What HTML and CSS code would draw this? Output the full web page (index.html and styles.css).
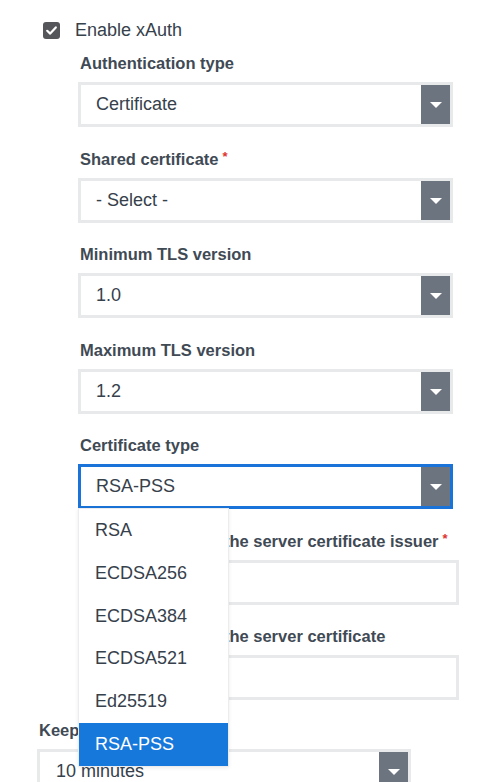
FILE: index.html
```html
<!DOCTYPE html>
<html>
<head>
<meta charset="utf-8">
<link rel="stylesheet" href="styles.css">
</head>
<body>
<div class="page">
  <label class="check-row">
    <span class="checkbox">
      <svg viewBox="0 0 17 17" width="17" height="17"><path d="M4.2 8.8 L7.2 11.6 L12.8 5.4" fill="none" stroke="#fff" stroke-width="2.2" stroke-linecap="round" stroke-linejoin="round"/></svg>
    </span>
    <span class="check-text">Enable xAuth</span>
  </label>

  <div class="group">
    <div class="field">
      <div class="label">Authentication type</div>
      <div class="select"><span class="value">Certificate</span><span class="btn"><i class="tri"></i></span></div>
    </div>
    <div class="field">
      <div class="label">Shared certificate<span class="req">*</span></div>
      <div class="select"><span class="value">- Select -</span><span class="btn"><i class="tri"></i></span></div>
    </div>
    <div class="field">
      <div class="label">Minimum TLS version</div>
      <div class="select"><span class="value">1.0</span><span class="btn"><i class="tri"></i></span></div>
    </div>
    <div class="field">
      <div class="label">Maximum TLS version</div>
      <div class="select"><span class="value">1.2</span><span class="btn"><i class="tri"></i></span></div>
    </div>
    <div class="field cert-field">
      <div class="label">Certificate type</div>
      <div class="select focused"><span class="value">RSA-PSS</span><span class="btn"><i class="tri"></i></span></div>
      <ul class="menu">
        <li>RSA</li>
        <li>ECDSA256</li>
        <li>ECDSA384</li>
        <li>ECDSA521</li>
        <li>Ed25519</li>
        <li class="selected">RSA-PSS</li>
      </ul>
    </div>
    <div class="field">
      <div class="label">Common name of the server certificate issuer<span class="req">*</span></div>
      <div class="input"></div>
    </div>
    <div class="field">
      <div class="label">Common name of the server certificate</div>
      <div class="input"></div>
    </div>
  </div>

  <div class="field outer-field">
    <div class="label">Keep alive interval</div>
    <div class="select wide"><span class="value">10 minutes</span><span class="btn"><i class="tri"></i></span></div>
  </div>
</div>
</body>
</html>
```

FILE: styles.css
```css
html, body {
  margin: 0;
  padding: 0;
  background: #fff;
  overflow: hidden;
}
body {
  font-family: "Liberation Sans", Arial, sans-serif;
  color: #3a4550;
}
.page {
  padding: 17px 0 0 43px;
  width: 496px;
  height: 782px;
  box-sizing: border-box;
}
.check-row {
  display: flex;
  align-items: center;
  gap: 15px;
  height: 26px;
}
.checkbox {
  width: 17px;
  height: 17px;
  border-radius: 3px;
  background: #555659;
  display: flex;
}
.check-text {
  font-size: 18px;
  color: #36414c;
}
.group {
  margin-left: 35px;
  margin-top: 11px;
  display: flex;
  flex-direction: column;
  gap: 22.5px;
}
.field {
  display: flex;
  flex-direction: column;
}
.label {
  font-size: 16.5px;
  font-weight: bold;
  line-height: 18px;
  height: 18px;
  margin-left: 2px;
  margin-bottom: 10px;
  color: #3f4a55;
  white-space: nowrap;
}
.req {
  color: #e0332f;
  font-size: 13px;
  vertical-align: top;
  margin-left: 4px;
  line-height: 14px;
}
.select {
  box-sizing: border-box;
  width: 375px;
  height: 45px;
  border: 3px solid #e8e9eb;
  background: #fff;
  display: flex;
  align-items: stretch;
}
.select .value {
  flex: 1;
  font-size: 18px;
  line-height: 39px;
  padding-left: 15px;
  color: #36414c;
}
.select .btn {
  width: 29px;
  background: #6c7480;
  display: flex;
  align-items: center;
  justify-content: center;
}
.tri {
  width: 0;
  height: 0;
  border-left: 6px solid transparent;
  border-right: 6px solid transparent;
  border-top: 6px solid #fff;
  margin-top: 1px;
}
.select.focused {
  border-color: #1a73d8;
}
.cert-field {
  position: relative;
}
.menu {
  position: absolute;
  left: 0;
  top: 72px;
  width: 151px;
  margin: 0;
  padding: 0;
  list-style: none;
  background: #fff;
  border: 1px solid #ececee;
  box-sizing: border-box;
  box-shadow: 0 1px 4px rgba(0, 0, 0, 0.08);
  z-index: 5;
}
.menu li {
  height: 42.8px;
  line-height: 42.8px;
  font-size: 18px;
  padding-left: 16px;
  color: #36414c;
}
.menu li.selected {
  background: #1778dc;
  color: #fff;
}
.input {
  box-sizing: border-box;
  width: 381px;
  height: 45px;
  border: 3px solid #e8e9eb;
  background: #fff;
}
.outer-field {
  margin-left: -6px;
  margin-top: 21px;
}
.select.wide {
  width: 374px;
}
.select.wide .value {
  padding-left: 16px;
}
```
